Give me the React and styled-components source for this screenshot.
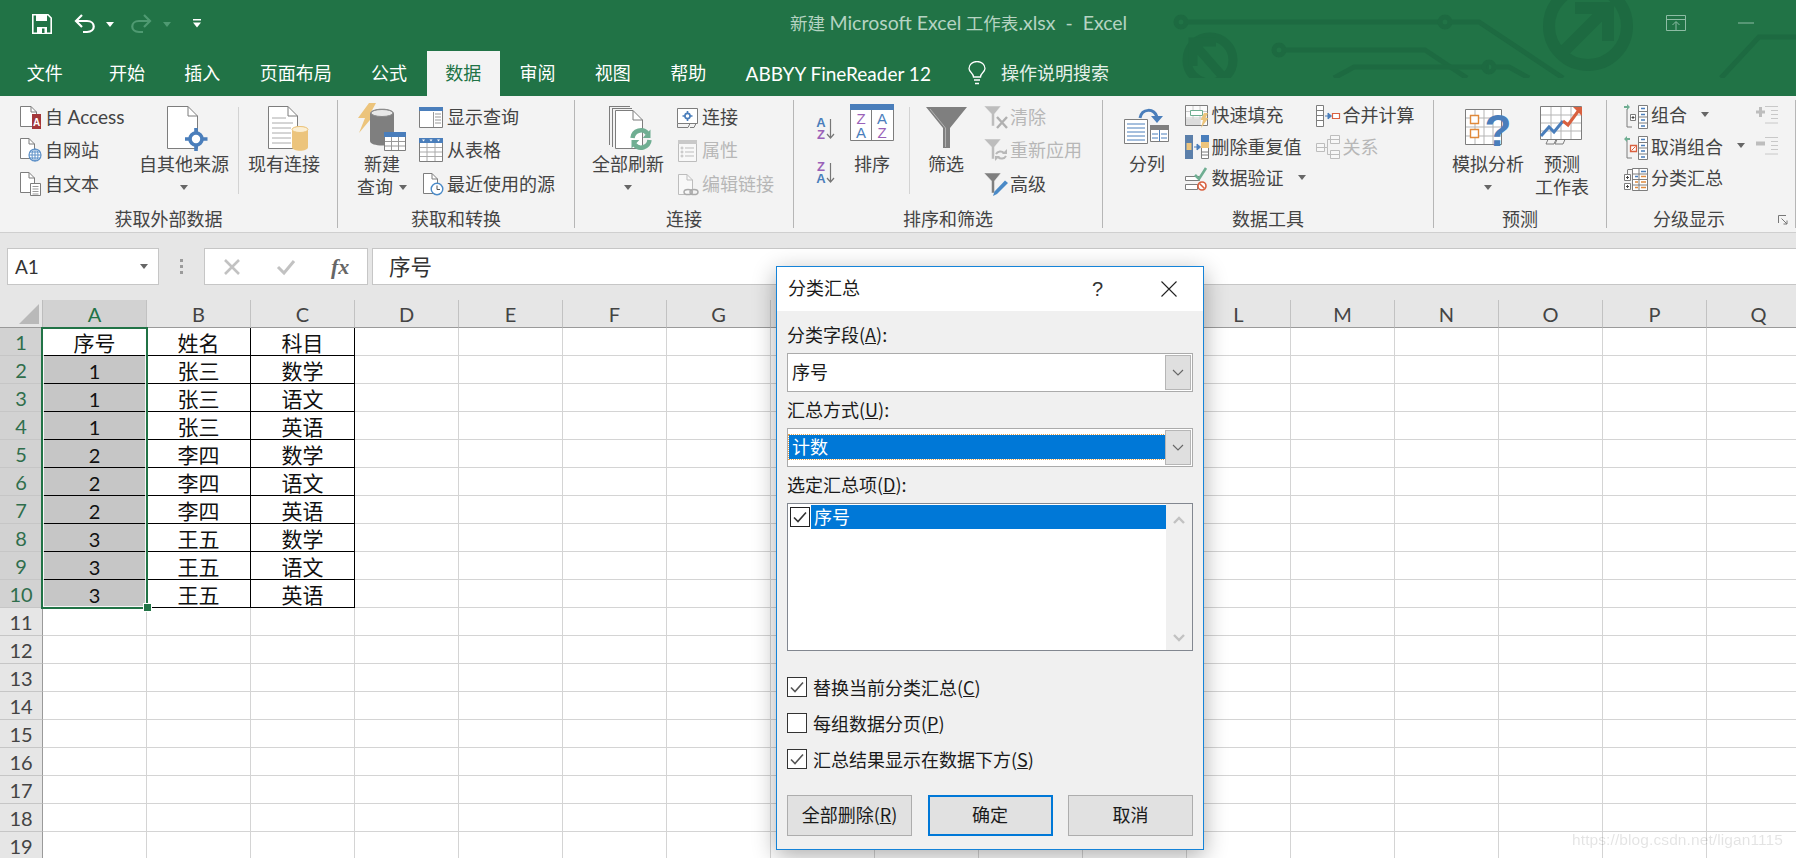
import React from 'react';
import styled, { createGlobalStyle } from 'styled-components';

const FONT = `Lato, "Noto Sans CJK SC", "Noto Sans", sans-serif`;
const BLUE = '#4a7ebb';
const GRN = '#6fae92';
const ORG = '#e08a3c';
const GOLD = '#ecc47c';
const PUR = '#9a62b8';
const LINE = '#7d7d7d';
const OFF = '#bdbdbd';

const Global = createGlobalStyle`
  html, body { margin: 0; padding: 0; width: 1796px; height: 858px; overflow: hidden; background: #fff; }
  * { box-sizing: border-box; }
  body { font-family: ${FONT}; color: #333; }
`;

const Page = styled.div`width: 1796px; height: 858px; overflow: hidden; position: relative;`;
const Latin = styled.span`font-size: ${p => p.$s}px;`;

/* ---------- header ---------- */
const Header = styled.header`height: 96px; background: #217346; position: relative; color: #fff;`;
const TitleRow = styled.div`height: 51px; display: flex; align-items: flex-start; position: relative;`;
const Qat = styled.div`width: 790px; height: 48px; display: flex; align-items: center; padding-left: 32px;`;
const QatItem = styled.span`display: flex; margin-left: ${p => p.$ml}px;`;
const Title = styled.div`font-size: 17.5px; line-height: 46px; color: #b5d3c2; white-space: pre;`;
const WindowControls = styled.div`margin-left: auto; height: 46px; padding-right: 42px; display: flex; align-items: center; gap: 52px;`;
const Circuit = styled.svg`position: absolute; left: 1170px; top: 0;`;
const Tabs = styled.nav`height: 45px; display: flex; position: relative;`;
const Tab = styled.div`
  height: 45px; line-height: 43px; font-size: ${p => p.$fs || 18}px; padding: 0 ${p => p.$pad || 19.7}px;
  white-space: nowrap; display: flex; align-items: center;
  background: ${p => (p.$on ? '#f3f3f3' : 'transparent')};
  color: ${p => (p.$on ? '#217346' : '#fff')};
`;
const FileTab = styled(Tab)`width: 89.3px; justify-content: center; padding: 0;`;
const SearchTab = styled(Tab)`padding: 0 0 0 17.5px; gap: 15px; color: #e6f0ea;`;

/* ---------- ribbon ---------- */
const Ribbon = styled.section`height: 137px; background: #f3f3f3; border-bottom: 1px solid #cfcfcf; display: flex; padding-top: 4px;`;
const Group = styled.div`width: ${p => p.$w}px; height: 128px; border-right: 1px solid #b6b6b6; display: flex; flex-direction: column; position: relative;`;
const GroupBody = styled.div`height: 107px; flex-shrink: 0; display: flex; padding-left: ${p => p.$pl || 0}px;`;
const GroupLabel = styled.div`height: 24px; flex-shrink: 0; line-height: 24px; font-size: 18px; text-align: center; color: #444; padding-right: ${p => p.$pr || 0}px;`;
const Launcher = styled.svg`position: absolute; right: 7px; bottom: 3px;`;
const Large = styled.div`width: ${p => p.$w}px; display: flex; flex-direction: column; align-items: center; flex-shrink: 0; font-size: 18px; line-height: 23px; color: #444;`;
const LargeIcon = styled.div`height: 54px; padding-top: 4px; display: flex; justify-content: center;`;
const Line = styled.div`height: 23px; padding-bottom: 2px; display: flex; align-items: center; white-space: nowrap;`;
const Caret = styled.i`display: inline-block; width: 0; height: 0; border-style: solid; border-width: 5px 4.5px 0; border-color: #666 transparent transparent; margin-left: ${p => p.$ml || 0}px; flex-shrink: 0;`;
const SmallCol = styled.div`width: ${p => (p.$w ? `${p.$w}px` : 'auto')}; padding-left: ${p => p.$pl || 0}px; flex-shrink: 0;`;
const SmallRow = styled.div`height: ${p => p.$h || 33.5}px; display: flex; align-items: center; font-size: 18px; white-space: nowrap; color: ${p => (p.$off ? '#b7b7b7' : '#444')};`;
const RowText = styled.span`display: flex; align-items: center; padding-bottom: ${p => p.$pb}px;`;
const Slot = styled.span`width: ${p => p.$w}px; display: flex; flex-shrink: 0;`;
const Divider = styled.div`width: 1px; height: 87px; margin: 7px 0 0 ${p => p.$ml || 0}px; background: #d3d3d3; flex-shrink: 0;`;
const SortStack = styled.div`width: 48px; padding: 17px 0 0 21px; display: flex; flex-direction: column; gap: 22px; flex-shrink: 0;`;
const Glyph = styled.svg`display: block; flex-shrink: 0; overflow: visible;`;

const Ico = ({ w = 24, h = 24, children }) => (
  <Glyph width={w} height={h} viewBox={`0 0 ${w} ${h}`} fill="none">{children}</Glyph>
);

const Doc = ({ x = 0, y = 0, w = 16, h = 22, f = 6, c = LINE, fill = '#fff' }) => (
  <g>
    <path d={`M${x + .5} ${y + .5}H${x + w - f}L${x + w - .5} ${y + f}V${y + h - .5}H${x + .5}Z`} fill={fill} stroke={c} />
    <path d={`M${x + w - f} ${y + .5}V${y + f}H${x + w - .5}`} stroke={c} />
  </g>
);

const Sync = ({ cx, cy, r, c = GRN, sw = 3 }) => (
  <g stroke={c} strokeWidth={sw} fill="none">
    <path d={`M${cx - r} ${cy - 1}A${r} ${r} 0 0 1 ${cx + r - 2} ${cy - r + 3}`} />
    <path d={`M${cx + r} ${cy + 1}A${r} ${r} 0 0 1 ${cx - r + 2} ${cy + r - 3}`} />
    <path d={`M${cx + r + 1} ${cy - r - 1}V${cy - 1}H${cx + r * .2}Z`} fill={c} stroke="none" />
    <path d={`M${cx - r - 1} ${cy + r + 1}V${cy + 1}H${cx - r * .2}Z`} fill={c} stroke="none" />
  </g>
);

const Funnel = ({ c }) => <path d="M0 1H17L10.5 9V21H7.5V9Z" fill={c} stroke="#f3f3f3" strokeWidth=".5" />;

/* small ribbon icons */
const IAccess = () => (
  <Ico><Doc y={1} w={17} h={21} />
    <path d="M12 9H21V24H12Z" fill="#a4373a" />
    <text x="16.5" y="21" fontSize="10" fontWeight="700" fill="#fff" textAnchor="middle" fontFamily="Liberation Sans">A</text>
  </Ico>
);
const IWeb = () => (
  <Ico><Doc y={0} w={15} h={21} />
    <circle cx="15" cy="17" r="6" fill="#fff" stroke="#5b8fc7" strokeWidth="1.2" />
    <path d="M9 17H21M10 14H20M10 20H20M15 11V23" stroke="#5b8fc7" />
    <ellipse cx="15" cy="17" rx="3" ry="6" stroke="#5b8fc7" />
  </Ico>
);
const IText = () => (
  <Ico><Doc y={0} w={15} h={21} />
    <path d="M10.5 11.5H20.5V23.5H10.5Z" fill="#fff" stroke={LINE} />
    <path d="M12.5 14.5H18.5M12.5 17H18.5M12.5 19.5H18.5M12.5 22H18.5" stroke="#999" />
  </Ico>
);
const IShow = () => (
  <Ico>
    <path d="M.5 2.5H23.5V22.5H.5Z" fill="#fff" stroke={LINE} />
    <path d="M0 2H24V6H0Z" fill={BLUE} />
    <path d="M16 9H22M16 12H22M16 15H22M16 18H22M14.5 7V22" stroke="#999" />
    <path d="M14 8.5H15" stroke="#999" />
  </Ico>
);
const IFromTable = () => (
  <Ico>
    <path d="M.5 .5H23.5V23.5H.5Z" fill="#fff" stroke={LINE} />
    <path d="M0 0H24V5H0Z" fill={BLUE} />
    <path d="M3 1.5H6L4.5 3.5ZM10.5 1.5H13.5L12 3.5ZM18 1.5H21L19.5 3.5Z" fill="#fff" />
    <path d="M1 9.5H23M1 14H23M1 18.5H23M8 5V23M16 5V23" stroke="#aaa" />
  </Ico>
);
const IRecent = () => (
  <Ico><Doc x={4} y={1} w={15} h={21} />
    <circle cx="18" cy="17" r="5.8" fill="#fff" stroke="#4a8ac7" strokeWidth="1.4" />
    <path d="M18 13.5V17.5H21" stroke="#555" />
  </Ico>
);
const IConn = () => (
  <Ico>
    <path d="M.5 3.5H20.5V18.5H.5Z" fill="#fff" stroke={LINE} />
    <path d="M.5 18.5V22.5H11L13 18.5M13 22.5H17L19 18.5" stroke={LINE} />
    <circle cx="10.5" cy="11" r="2.6" stroke={BLUE} strokeWidth="1.6" />
    <path d="M10.5 6V9M10.5 13V16M5.5 11H8.5M12.5 11H15.5" stroke={BLUE} strokeWidth="1.6" />
  </Ico>
);
const IProp = () => (
  <Ico>
    <path d="M1.5 2.5H19.5V23.5H1.5Z" fill="#f8f8f8" stroke={OFF} />
    <path d="M1 2H20V6H1Z" fill="#c9c9c9" />
    <path d="M8 10H17M8 14H17M8 18H17" stroke={OFF} />
    <circle cx="5" cy="10" r="1" stroke={OFF} /><circle cx="5" cy="14" r="1" stroke={OFF} /><circle cx="5" cy="18" r="1" stroke={OFF} />
  </Ico>
);
const ILinks = () => (
  <Ico><Doc x={1} y={2} w={15} h={21} c={OFF} fill="#f8f8f8" />
    <ellipse cx="11" cy="20" rx="4" ry="2.6" stroke="#aaa" strokeWidth="1.5" />
    <ellipse cx="17" cy="20" rx="4" ry="2.6" stroke="#aaa" strokeWidth="1.5" />
  </Ico>
);
const ISortAZ = ({ rev }) => (
  <Ico w={20} h={22}>
    <text x="6" y="10" fontSize="13" fontWeight="700" fill={rev ? PUR : BLUE} textAnchor="middle" fontFamily="Liberation Sans">{rev ? 'Z' : 'A'}</text>
    <text x="6" y="21.5" fontSize="13" fontWeight="700" fill={rev ? BLUE : PUR} textAnchor="middle" fontFamily="Liberation Sans">{rev ? 'A' : 'Z'}</text>
    <path d="M15.5 2V21M12 17L15.5 21L19 17" stroke="#777" strokeWidth="1.2" />
  </Ico>
);
const IClear = () => (
  <Ico><Funnel c={OFF} /><path d="M13 12L23 23M23 12L13 23" stroke="#b0b0b0" strokeWidth="2.4" /></Ico>
);
const IReapply = () => (
  <Ico><Funnel c={OFF} /><Sync cx={17} cy={17} r={5} c="#b8b8b8" sw={2} /></Ico>
);
const IAdv = () => (
  <Ico><Funnel c="#7f7f7f" /><path d="M9 24L10.5 19.5L21 8.5L24 11L13 22Z" fill="#4a8ac7" /></Ico>
);
const IFlash = () => (
  <Ico>
    <path d="M.5 1.5H22.5V21.5H.5Z" fill="#fbfbfb" stroke={LINE} />
    <path d="M1 7.5H22M1 14H22M8 2V21M15 2V21" stroke="#ccc" />
    <path d="M5.5 6.5H17.5V11.5H5.5Z" fill="#fff" stroke={GRN} />
    <path d="M1 15H15V21H1Z" fill="#dcdcdc" />
    <path d="M19 9L23 9L20.5 14H23.5L16 24L18 16H15.5Z" fill={GOLD} />
  </Ico>
);
const IDedupe = () => (
  <Ico>
    <path d="M0 0H8V24H0Z" fill="#5b7faa" /><path d="M1.5 8H6.5V15H1.5Z" fill={GOLD} />
    <path d="M16.5 .5H23.5V23.5H16.5Z" fill="#fff" stroke={LINE} />
    <path d="M16 0H24V7H16Z" fill={BLUE} /><path d="M16 7H24V13H16Z" fill={GOLD} />
    <path d="M17 17H23M17 20H23" stroke={LINE} />
    <path d="M9 12H12M12 9L15.5 12L12 15Z" fill={BLUE} stroke={BLUE} />
  </Ico>
);
const IValid = () => (
  <Ico>
    <path d="M.5 9.5H14.5V13.5H.5ZM.5 17.5H12.5V22.5H.5Z" fill="#fff" stroke={LINE} />
    <path d="M10 8L14 12L21 1" stroke={GRN} strokeWidth="2.6" />
    <circle cx="17" cy="19" r="4" fill="#fff" stroke="#d9603f" strokeWidth="1.6" />
    <path d="M14.5 16.5L19.5 21.5" stroke="#d9603f" strokeWidth="1.6" />
  </Ico>
);
const IConsolidate = () => (
  <Ico>
    <path d="M.5 1.5H7.5V22.5H.5Z" fill="#fff" stroke={LINE} />
    <path d="M1 6.5H7M1 11.5H7M1 16.5H7" stroke={LINE} />
    <path d="M9 12H12M12 9L15.5 12L12 15Z" fill={BLUE} stroke={BLUE} />
    <path d="M16.5 9.5H23.5V14.5H16.5Z" fill="#fff" stroke="#d9603f" strokeWidth="1.2" />
  </Ico>
);
const IRelation = () => (
  <Ico>
    <path d="M.5 8.5H8.5V16.5H.5ZM14.5 .5H23.5V8.5H14.5ZM14.5 15.5H23.5V23.5H14.5Z" fill="#f7f7f7" stroke={OFF} />
    <path d="M1 12.5H8M15 4.5H23M15 19.5H23M8.5 12.5H11.5V4.5H14.5M11.5 12.5V19.5H14.5" stroke={OFF} />
  </Ico>
);
const IGroupTop = ({ back }) => (
  <Ico>
    <path d="M3 5V23H8" stroke={LINE} />
    <path d={back ? 'M6.5 10.5H12.5V16.5H6.5Z' : 'M6.5 10.5H11.5V16.5H6.5Z'} fill="#fff" stroke={back ? '#d9603f' : LINE} strokeWidth={back ? 1.3 : 1} />
    {back ? <path d="M7.5 15.5L11.5 11.5" stroke="#d9603f" /> : <path d="M7.5 13.5H10.5M9 12V15" stroke="#444" />}
    <path d="M14.5 1.5H23.5V24.5H14.5Z" fill="#fff" stroke={LINE} />
    <path d="M15 7.5H23M15 13H23M15 19H23" stroke={LINE} />
    <path d="M17 4.5H21M17 10.5H21M17 16H21M17 22H21" stroke={BLUE} strokeWidth="1.3" />
    {back
      ? <path d="M6 3H3V1L0 4L3 7V5H6Z" fill={GRN} />
      : <path d="M0 2H3V0L6 3L3 6V4H0Z" fill={GRN} />}
  </Ico>
);
const ISubtotal = () => (
  <Ico>
    <path d="M.5 7.5H6.5V13.5H.5ZM.5 16.5H6.5V22.5H.5Z" fill="#fff" stroke={LINE} />
    <path d="M2 10.5H5M3.5 9V12M2 19.5H5M3.5 18V21" stroke="#444" />
    <path d="M4 2.5H8M3.5 2.5V7" stroke={LINE} />
    <path d="M8.5 1.5H23.5V23.5H8.5Z" fill="#fff" stroke={LINE} />
    <path d="M9 7H23M9 12.5H23M9 18H23M15 2V23" stroke={LINE} />
    <path d="M17 4.5H22M11 9.5H14" stroke={BLUE} strokeWidth="1.3" />
    <path d="M17 9.5H22M17 15H22M11 20.5H14" stroke={ORG} strokeWidth="1.3" />
    <path d="M17 20.5H22M11 15H14" stroke={ORG} strokeWidth="1.3" />
  </Ico>
);
const IShowDetail = ({ minus }) => (
  <Ico>
    {minus
      ? <path d="M0 6.5H9V10.5H0Z" fill={OFF} />
      : <path d="M3 3H6V6.5H9V9.5H6V13H3V9.5H0V6.5H3Z" fill={OFF} />}
    <path d="M9 2.5H22M15 6.5H22M15 10.5H22M15 14.5H22M9 19H22" stroke="#c8c8c8" />
  </Ico>
);

/* large ribbon icons: 50px wide, y0 = 104 */
const LOther = () => (
  <Ico w={50} h={50}>
    <Doc x={8} y={2} w={31} h={43} f={10} />
    <circle cx="37" cy="35" r="6" fill="#fff" stroke={BLUE} strokeWidth="3.6" />
    <path d="M37 24V29M37 41V47M26 35H31M43 35H48.5" stroke={BLUE} strokeWidth="3.6" />
  </Ico>
);
const LExisting = () => (
  <Ico w={50} h={50}>
    <Doc x={9} y={2} w={30} h={43} f={10} />
    <path d="M13 14H27M13 19H34M13 24H32M13 29H32M13 34H32M13 39H32" stroke="#aaa" />
    <path d="M33 26C33 21 49 21 49 26V43C49 48 33 48 33 43Z" fill={GOLD} />
    <ellipse cx="41" cy="25.5" rx="8" ry="3" fill="#fbeed2" stroke={GOLD} />
  </Ico>
);
const LNewQuery = () => (
  <Ico w={50} h={50}>
    <path d="M12 -1H19L13 10H18L2 29L8 14H1Z" fill={GOLD} />
    <path d="M13 10C13 3 37 3 37 10V37C37 43 13 43 13 37Z" fill="#7f7f7f" />
    <ellipse cx="25" cy="9" rx="11" ry="3.5" fill="#e8e8e8" stroke="#8a8a8a" />
    <path d="M27.5 28.5H48.5V46.5H27.5Z" fill="#fff" stroke={LINE} />
    <path d="M27 28H49V33H27Z" fill={BLUE} />
    <path d="M28 37.5H48M28 42H48M34.5 33V46M41.5 33V46" stroke="#999" />
  </Ico>
);
const LRefresh = () => (
  <Ico w={50} h={50}>
    <path d="M6 2.5H27" stroke={LINE} /><path d="M6.5 2V41" stroke={LINE} />
    <path d="M9 4.5H29" stroke={LINE} /><path d="M9.5 4V43" stroke={LINE} />
    <Doc x={12} y={6} w={28} h={39} f={10} />
    <Sync cx={38} cy={35} r={8.5} sw={4.5} />
  </Ico>
);
const LSort = () => (
  <Ico w={44} h={38}>
    <path d="M.5 .5H43.5V36.5H.5Z" fill="#fff" stroke={LINE} />
    <path d="M0 0H44V6H0Z" fill={BLUE} />
    <path d="M21.5 6V36" stroke={LINE} />
    <g fontFamily="Liberation Sans" fontSize="15" textAnchor="middle">
      <text x="11" y="20" fill={PUR}>Z</text><text x="11" y="34" fill={BLUE}>A</text>
      <text x="32" y="20" fill={BLUE}>A</text><text x="32" y="34" fill={PUR}>Z</text>
    </g>
  </Ico>
);
const LFilter = () => (
  <Ico w={50} h={50}>
    <path d="M5 3H46L29 24V44H22V24Z" fill="#7f7f7f" />
    <path d="M9 5L24.5 24V43" stroke="#bdbdbd" strokeWidth=".8" />
  </Ico>
);
const LSplit = () => (
  <Ico w={50} h={50}>
    <path d="M2.5 15.5H25.5V39.5H2.5Z" fill="#fff" stroke={LINE} />
    <path d="M5 20H23M5 24H23M5 28H23M5 32H23M5 36H23" stroke={BLUE} />
    <path d="M28.5 21.5H46.5V37.5H28.5Z" fill="#fff" stroke={LINE} />
    <path d="M28 21H47V26H28Z" fill="#7f7f7f" />
    <path d="M30 30H36M39 30H45M30 34H36M39 34H45M37.5 26V37" stroke={BLUE} />
    <path d="M18 14C20 4 32 4 35 13" stroke={BLUE} strokeWidth="3" />
    <path d="M29 12H41L35 19Z" fill={BLUE} />
  </Ico>
);
const LWhatIf = () => (
  <Ico w={50} h={50}>
    <path d="M2.5 5.5H38.5V40.5H2.5Z" fill="#fff" stroke={LINE} />
    <path d="M3 14H38M3 23H38M3 32H38M12 6V40M21 6V40M30 6V40" stroke="#b5b5b5" />
    <path d="M7.5 11.5H15.5V19.5H7.5ZM7.5 25.5H15.5V33.5H7.5Z" fill="#fff" stroke={ORG} strokeWidth="1.4" />
    <text x="35" y="42" fontSize="44" fontWeight="700" fill={BLUE} textAnchor="middle" fontFamily="Liberation Sans">?</text>
  </Ico>
);
const LForecast = () => (
  <Ico w={44} h={40}>
    <path d="M.5 2.5H41.5V35.5H.5Z" fill="#fff" stroke={LINE} />
    <path d="M1 11H41M1 19H41M1 27H41M11 3V35M21 3V35M31 3V35" stroke="#b5b5b5" />
    <path d="M8 35.5L6 40H14L16 35.5M17 35.5L15 40H23L25 35.5" stroke={LINE} />
    <path d="M1 32L9 23L14 28L23 17" stroke={BLUE} strokeWidth="3" />
    <path d="M23 17L28 21L39 6" stroke="#d9603f" strokeWidth="3" />
    <path d="M33 3H42V12Z" fill="#d9603f" />
  </Ico>
);

/* ---------- formula bar ---------- */
const FormulaBar = styled.div`height: 67px; background: #e6e6e6; padding: 15px 0 15px 7px; display: flex; align-items: stretch;`;
const NameBox = styled.div`width: 152px; background: #fff; border: 1px solid #c6c6c6; display: flex; align-items: center; justify-content: space-between; padding: 0 10px 0 7px; font-size: 19px; color: #333;`;
const Grip = styled.div`width: 45px; display: flex; flex-direction: column; align-items: center; justify-content: center; gap: 3px;`;
const GripDot = styled.i`width: 3px; height: 3px; background: #9b9b9b; display: block;`;
const FxBox = styled.div`width: 164px; background: #fff; border: 1px solid #c6c6c6; display: flex; align-items: center; padding-left: 18px; gap: 35px;`;
const FxText = styled.span`font-family: "Liberation Serif", serif; font-style: italic; font-weight: 700; font-size: 22px; color: #666;`;
const FormulaInput = styled.div`flex: 1; margin-left: 4px; background: #fff; border: 1px solid #c6c6c6; border-right: 0; display: flex; align-items: center; padding: 0 0 3px 16px; font-size: 21.5px; color: #333;`;

/* ---------- sheet ---------- */
const Sheet = styled.div`position: relative; display: grid; grid-template-columns: 43px repeat(17, 104px); grid-template-rows: 28px repeat(19, 28px); width: 1811px;`;
const Corner = styled.div`background: #e6e6e6; border-right: 1px solid #bdbdbd; border-bottom: 1px solid #9a9a9a; position: relative;`;
const CornerMark = styled.i`position: absolute; right: 3px; bottom: 3px; width: 0; height: 0; border-style: solid; border-width: 0 0 20px 20px; border-color: transparent transparent #b9b9b9;`;
const ColHead = styled.div`
  background: ${p => (p.$on ? '#d2d2d2' : '#e6e6e6')}; color: ${p => (p.$on ? '#217346' : '#444')};
  border-right: 1px solid #c2c2c2; border-bottom: 1px solid #9a9a9a;
  display: flex; align-items: center; justify-content: center; font-size: 20px; padding-top: 1px;
`;
const RowHead = styled.div`
  background: ${p => (p.$on ? '#d2d2d2' : '#e6e6e6')}; color: ${p => (p.$on ? '#2f6e4c' : '#444')};
  border-right: 1px solid #9a9a9a; border-bottom: 1px solid #c6c6c6;
  display: flex; align-items: center; justify-content: center; font-size: 20px; padding-top: 1px;
`;
const Cell = styled.div`
  background: ${p => (p.$fill ? '#c6c6c6' : '#fff')};
  border-right: 1px solid ${p => (p.$ruled ? '#000' : '#d4d4d4')};
  border-bottom: 1px solid ${p => (p.$ruled ? '#000' : '#d4d4d4')};
  display: flex; align-items: center; justify-content: center;
  font-size: ${p => (p.$num ? 20 : 21)}px; color: #111; padding-top: 2px; line-height: 1;
`;
const Selection = styled.div`position: absolute; left: 41px; top: 26.5px; width: 107px; height: 282px; border: 2.5px solid #217346; box-shadow: inset 0 0 0 1px rgba(255,255,255,.85); pointer-events: none;`;
const FillHandle = styled.i`position: absolute; right: -4.5px; bottom: -4.5px; width: 7px; height: 7px; background: #217346; outline: 1px solid #fff;`;
const Watermark = styled.div`position: absolute; left: 1572px; top: 831px; font: 15.5px "Liberation Sans", sans-serif; color: rgba(0,0,0,.11); letter-spacing: .1px; white-space: nowrap; filter: blur(.4px);`;

/* ---------- dialog ---------- */
const Dialog = styled.div`position: absolute; left: 776px; top: 266px; width: 428px; height: 584px; background: #f0f0f0; border: 1.5px solid #1583d8; box-shadow: 0 6px 22px rgba(0,0,0,.32); font-size: 18px; color: #1a1a1a; font-family: "Noto Sans CJK SC", sans-serif;`;
const DialogTitle = styled.div`height: 44px; background: #fff; display: flex; align-items: center; padding: 0 26px 0 11px; font-size: 18px;`;
const DialogTitleText = styled.span`padding-bottom: 4px;`;
const DialogHelp = styled.span`margin-left: auto; margin-right: 58px; font-size: 20px; font-family: "Liberation Sans", sans-serif; color: #333;`;
const DialogBody = styled.div`padding: 13px 10px 0 10px;`;
const Label = styled.div`height: 24px; line-height: 20px; margin-bottom: 5px; margin-top: ${p => p.$mt || 0}px;`;
const Combo = styled.div`height: 39px; background: #fff; border: 1px solid #ababab; display: flex; padding: 1px; `;
const ComboValue = styled.div`
  flex: 1; height: ${p => (p.$on ? 24 : 34)}px; margin: ${p => (p.$on ? '5px 0' : '0')}; padding: 0 0 2px 3px;
  display: flex; align-items: center;
  background: ${p => (p.$on ? '#0078d7' : 'transparent')}; color: ${p => (p.$on ? '#fff' : '#1a1a1a')};
  outline: ${p => (p.$on ? '1px dotted #e8a24a' : 'none')};
`;
const DropBtn = styled.div`width: 26px; height: 35px; background: #dfdfdf; border: 1px solid #b6b6b6; display: flex; align-items: center; justify-content: center;`;
const ListBox = styled.div`height: 148px; background: #fff; border: 1px solid #828790; display: flex;`;
const ListArea = styled.div`flex: 1; padding: 1px 0 0 2px;`;
const ListItem = styled.div`display: flex; align-items: center; gap: 1px;`;
const ListBar = styled.div`flex: 1; height: 24px; background: #0078d7; color: #fff; padding: 0 0 2px 3px; display: flex; align-items: center;`;
const ScrollBar = styled.div`width: 26px; background: #f0f0f0; display: flex; flex-direction: column; justify-content: space-between; align-items: center; padding: 12px 0 8px;`;
const CheckBox = styled.span`width: 20px; height: 20px; background: #fff; border: 1px solid ${p => (p.$dark ? '#222' : '#333')}; display: flex; align-items: center; justify-content: center; flex-shrink: 0;`;
const Options = styled.div`margin-top: 18px;`;
const Option = styled.div`height: 36px; display: flex; align-items: center; gap: 6px;`;
const Buttons = styled.div`margin-top: 18px; display: flex; justify-content: space-between;`;
const Button = styled.div`width: 125px; height: 41px; background: #e1e1e1; border: ${p => (p.$primary ? '2px solid #0078d7' : '1px solid #adadad')}; text-align: center; line-height: ${p => (p.$primary ? 34 : 36)}px;`;

const Tick = ({ c = '#555', sw = 1.6 }) => (
  <svg width="14" height="12" viewBox="0 0 14 12" fill="none"><path d="M1 6.5L5 10.5L13 1.5" stroke={c} strokeWidth={sw} /></svg>
);
const Chevron = () => (
  <svg width="12" height="7" viewBox="0 0 12 7" fill="none"><path d="M1 1L6 6L11 1" stroke="#666" strokeWidth="1.1" /></svg>
);

const columns = 'ABCDEFGHIJKLMNOPQ'.split('');
const data = [
  ['序号', '姓名', '科目'], ['1', '张三', '数学'], ['1', '张三', '语文'], ['1', '张三', '英语'],
  ['2', '李四', '数学'], ['2', '李四', '语文'], ['2', '李四', '英语'],
  ['3', '王五', '数学'], ['3', '王五', '语文'], ['3', '王五', '英语'],
];
const tabs = ['开始', '插入', '页面布局', '公式', '数据', '审阅', '视图', '帮助'];

const Row = ({ icon, slot, h, off, children }) => (
  <SmallRow $h={h} $off={off}><Slot $w={slot}>{icon}</Slot><RowText $pb={h ? 3 : 2}>{children}</RowText></SmallRow>
);

export default function App() {
  return (
    <Page>
      <Global />
      <Header>
        <Circuit width="626" height="78" viewBox="0 0 626 78" fill="none" stroke="#1d6a41">
          <g strokeWidth="5">
            <circle cx="11" cy="22" r="5" /><path d="M16 22H270" />
            <circle cx="275" cy="22" r="5" /><path d="M280 22H309L393 78" />
            <circle cx="109" cy="50" r="5" /><path d="M114 50H255L297 78" />
            <path d="M164 78L184 67H319" /><circle cx="319" cy="67" r="5" /><path d="M324 67H339L359 78" />
            <path d="M551 78L589 37H626" />
          </g>
          <circle cx="418" cy="26" r="39" strokeWidth="12" />
          <path d="M395 50L435 10M405 8H438V41" strokeWidth="12" />
          <circle cx="40" cy="60" r="23" strokeWidth="9" />
          <path d="M54 78L26 46M23 66V42H46" strokeWidth="9" />
        </Circuit>
        <TitleRow>
          <Qat>
            <QatItem $ml={0}>
              <svg width="20" height="20" viewBox="0 0 20 20" fill="none"><path d="M.8 .8H16L19.2 4V19.2H.8Z" stroke="#fff" strokeWidth="1.6" fill="#217346" /><path d="M4 1V7H15V1" fill="#fff" /><path d="M5 13H15V19H5Z" fill="#fff" /><path d="M10 14.5H12.5V19H10Z" fill="#217346" /></svg>
            </QatItem>
            <QatItem $ml={22}>
              <svg width="22" height="20" viewBox="0 0 22 20" fill="none"><path d="M2 7H13C22 7 22 18 13 18H9" stroke="#fff" strokeWidth="2.2" /><path d="M8 1L2 7L8 13" stroke="#fff" strokeWidth="2.2" /></svg>
            </QatItem>
            <QatItem $ml={10}><Caret style={{ borderTopColor: '#fff' }} /></QatItem>
            <QatItem $ml={16}>
              <svg width="22" height="20" viewBox="0 0 22 20" fill="none"><path d="M20 7H9C0 7 0 18 9 18H13" stroke="#4f9a72" strokeWidth="2.2" /><path d="M14 1L20 7L14 13" stroke="#4f9a72" strokeWidth="2.2" /></svg>
            </QatItem>
            <QatItem $ml={11}><Caret style={{ borderTopColor: '#4f9a72' }} /></QatItem>
            <QatItem $ml={22}>
              <svg width="8" height="10" viewBox="0 0 8 10"><path d="M0 0H8V1.5H0ZM0 3.5H8L4 8.5Z" fill="#fff" /></svg>
            </QatItem>
          </Qat>
          <Title>新建 <Latin $s={19.5}>Microsoft Excel</Latin> 工作表<Latin $s={19.5}>.xlsx  -  Excel</Latin></Title>
          <WindowControls>
            <svg width="20" height="16" viewBox="0 0 20 16" fill="none" stroke="#8dbca4"><path d="M.5 .5H19.5V15.5H.5ZM1 4.5H19M10 15V7M6.5 10L10 6.5L13.5 10" /></svg>
            <svg width="16" height="2" viewBox="0 0 16 2"><path d="M0 1H16" stroke="#8dbca4" /></svg>
          </WindowControls>
        </TitleRow>
        <Tabs>
          <FileTab>文件</FileTab>
          {tabs.map(t => <Tab key={t} $on={t === '数据'} $pad={t === '数据' ? 18.5 : undefined}>{t}</Tab>)}
          <Tab $fs={19}>ABBYY FineReader 12</Tab>
          <SearchTab>
            <svg width="18" height="25" viewBox="0 0 18 25" fill="none" stroke="#fff" strokeWidth="1.3"><path d="M5.5 16C5.5 12 1 11 1 7.5A8 7 0 0 1 17 7.5C17 11 12.5 12 12.5 16Z" /><path d="M6 19H12M7 22.5H11" strokeWidth="1.6" /></svg>
            操作说明搜索
          </SearchTab>
        </Tabs>
      </Header>

      <Ribbon>
        <Group $w={338}>
          <GroupBody>
            <SmallCol $w={138} $pl={20}>
              <Row slot={25} icon={<IAccess />}><span>自 <Latin $s={19}>Access</Latin></span></Row>
              <Row slot={25} icon={<IWeb />}>自网站</Row>
              <Row slot={25} icon={<IText />}>自文本</Row>
            </SmallCol>
            <Large $w={92}>
              <LargeIcon><LOther /></LargeIcon>
              <Line>自其他来源</Line>
              <Line><Caret /></Line>
            </Large>
            <Divider $ml={8} />
            <Large $w={90}>
              <LargeIcon><LExisting /></LargeIcon>
              <Line>现有连接</Line>
            </Large>
          </GroupBody>
          <GroupLabel>获取外部数据</GroupLabel>
        </Group>

        <Group $w={237}>
          <GroupBody $pl={8}>
            <Large $w={72}>
              <LargeIcon><LNewQuery /></LargeIcon>
              <Line>新建</Line>
              <Line>查询<Caret $ml={6} /></Line>
            </Large>
            <SmallCol $pl={1}>
              <Row slot={28} icon={<IShow />}>显示查询</Row>
              <Row slot={28} icon={<IFromTable />}>从表格</Row>
              <Row slot={28} icon={<IRecent />}>最近使用的源</Row>
            </SmallCol>
          </GroupBody>
          <GroupLabel>获取和转换</GroupLabel>
        </Group>

        <Group $w={219}>
          <GroupBody $pl={5}>
            <Large $w={96}>
              <LargeIcon><LRefresh /></LargeIcon>
              <Line>全部刷新</Line>
              <Line><Caret /></Line>
            </Large>
            <SmallCol $pl={1}>
              <Row slot={25} icon={<IConn />}>连接</Row>
              <Row slot={25} off icon={<IProp />}>属性</Row>
              <Row slot={25} off icon={<ILinks />}>编辑链接</Row>
            </SmallCol>
          </GroupBody>
          <GroupLabel>连接</GroupLabel>
        </Group>

        <Group $w={309}>
          <GroupBody>
            <SortStack><ISortAZ /><ISortAZ rev /></SortStack>
            <Large $w={60}>
              <LargeIcon><LSort /></LargeIcon>
              <Line>排序</Line>
            </Large>
            <Divider $ml={7} />
            <Large $w={72}>
              <LargeIcon><LFilter /></LargeIcon>
              <Line>筛选</Line>
            </Large>
            <SmallCol $pl={2}>
              <Row slot={26} off icon={<IClear />}>清除</Row>
              <Row slot={26} off icon={<IReapply />}>重新应用</Row>
              <Row slot={26} icon={<IAdv />}>高级</Row>
            </SmallCol>
          </GroupBody>
          <GroupLabel>排序和筛选</GroupLabel>
        </Group>

        <Group $w={331}>
          <GroupBody $pl={6}>
            <Large $w={76}>
              <LargeIcon><LSplit /></LargeIcon>
              <Line>分列</Line>
            </Large>
            <SmallCol $w={131}>
              <Row slot={26.5} h={31.5} icon={<IFlash />}>快速填充</Row>
              <Row slot={26.5} h={31.5} icon={<IDedupe />}>删除重复值</Row>
              <Row slot={26.5} h={31.5} icon={<IValid />}>数据验证<Caret $ml={14} /></Row>
            </SmallCol>
            <SmallCol>
              <Row slot={26.5} h={31.5} icon={<IConsolidate />}>合并计算</Row>
              <Row slot={26.5} h={31.5} off icon={<IRelation />}>关系</Row>
            </SmallCol>
          </GroupBody>
          <GroupLabel>数据工具</GroupLabel>
        </Group>

        <Group $w={173}>
          <GroupBody $pl={10}>
            <Large $w={88}>
              <LargeIcon><LWhatIf /></LargeIcon>
              <Line>模拟分析</Line>
              <Line><Caret /></Line>
            </Large>
            <Large $w={60}>
              <LargeIcon><LForecast /></LargeIcon>
              <Line>预测</Line>
              <Line>工作表</Line>
            </Large>
          </GroupBody>
          <GroupLabel>预测</GroupLabel>
        </Group>

        <Group $w={189}>
          <GroupBody>
            <SmallCol $w={149} $pl={17}>
              <Row slot={27} h={31.5} icon={<IGroupTop />}>组合<Caret $ml={14} /></Row>
              <Row slot={27} h={31.5} icon={<IGroupTop back />}>取消组合<Caret $ml={14} /></Row>
              <Row slot={27} h={31.5} icon={<ISubtotal />}>分类汇总</Row>
            </SmallCol>
            <SmallCol>
              <Row slot={24} h={31.5} icon={<IShowDetail />} />
              <Row slot={24} h={31.5} icon={<IShowDetail minus />} />
            </SmallCol>
          </GroupBody>
          <GroupLabel $pr={24}>分级显示</GroupLabel>
          <Launcher width="10" height="10" viewBox="0 0 10 10" fill="none" stroke="#777"><path d="M.5 8V.5H8M3.5 3.5L9 9M9 5.5V9H5.5" /></Launcher>
        </Group>
      </Ribbon>

      <FormulaBar>
        <NameBox>A1<Caret /></NameBox>
        <Grip><GripDot /><GripDot /><GripDot /></Grip>
        <FxBox>
          <svg width="18" height="18" viewBox="0 0 18 18" fill="none"><path d="M2 2L16 16M16 2L2 16" stroke="#c2c2c2" strokeWidth="2.6" /></svg>
          <svg width="20" height="18" viewBox="0 0 20 18" fill="none"><path d="M2 9L8 15L18 3" stroke="#c2c2c2" strokeWidth="3" /></svg>
          <FxText>fx</FxText>
        </FxBox>
        <FormulaInput>序号</FormulaInput>
      </FormulaBar>

      <Sheet>
        <Corner><CornerMark /></Corner>
        {columns.map(c => <ColHead key={c} $on={c === 'A'}>{c}</ColHead>)}
        {Array.from({ length: 19 }, (_, r) => (
          <React.Fragment key={r}>
            <RowHead $on={r < 10}>{r + 1}</RowHead>
            {columns.map((c, i) => {
              const v = r < 10 && i < 3 ? data[r][i] : '';
              return (
                <Cell key={c} $ruled={r < 10 && i < 3} $fill={i === 0 && r > 0 && r < 10} $num={i === 0 && r > 0}>{v}</Cell>
              );
            })}
          </React.Fragment>
        ))}
        <Selection><FillHandle /></Selection>
      </Sheet>

      <Watermark>https://blog.csdn.net/ligan1115</Watermark>

      <Dialog>
        <DialogTitle>
          <DialogTitleText>分类汇总</DialogTitleText>
          <DialogHelp>?</DialogHelp>
          <svg width="16" height="16" viewBox="0 0 16 16" fill="none"><path d="M.5 .5L15.5 15.5M15.5 .5L.5 15.5" stroke="#222" strokeWidth="1.1" /></svg>
        </DialogTitle>
        <DialogBody>
          <Label>分类字段(<u>A</u>):</Label>
          <Combo>
            <ComboValue>序号</ComboValue>
            <DropBtn><Chevron /></DropBtn>
          </Combo>
          <Label $mt={7}>汇总方式(<u>U</u>):</Label>
          <Combo>
            <ComboValue $on>计数</ComboValue>
            <DropBtn><Chevron /></DropBtn>
          </Combo>
          <Label $mt={7}>选定汇总项(<u>D</u>):</Label>
          <ListBox>
            <ListArea>
              <ListItem>
                <CheckBox $dark><Tick c="#333" /></CheckBox>
                <ListBar>序号</ListBar>
              </ListItem>
            </ListArea>
            <ScrollBar>
              <svg width="12" height="8" viewBox="0 0 12 8" fill="none"><path d="M1 7L6 2L11 7" stroke="#c2c2c2" strokeWidth="2.4" /></svg>
              <svg width="12" height="8" viewBox="0 0 12 8" fill="none"><path d="M1 1L6 6L11 1" stroke="#c2c2c2" strokeWidth="2.4" /></svg>
            </ScrollBar>
          </ListBox>
          <Options>
            <Option><CheckBox><Tick /></CheckBox><span>替换当前分类汇总(<u>C</u>)</span></Option>
            <Option><CheckBox /><span>每组数据分页(<u>P</u>)</span></Option>
            <Option><CheckBox><Tick /></CheckBox><span>汇总结果显示在数据下方(<u>S</u>)</span></Option>
          </Options>
          <Buttons>
            <Button>全部删除(<u>R</u>)</Button>
            <Button $primary>确定</Button>
            <Button>取消</Button>
          </Buttons>
        </DialogBody>
      </Dialog>
    </Page>
  );
}
